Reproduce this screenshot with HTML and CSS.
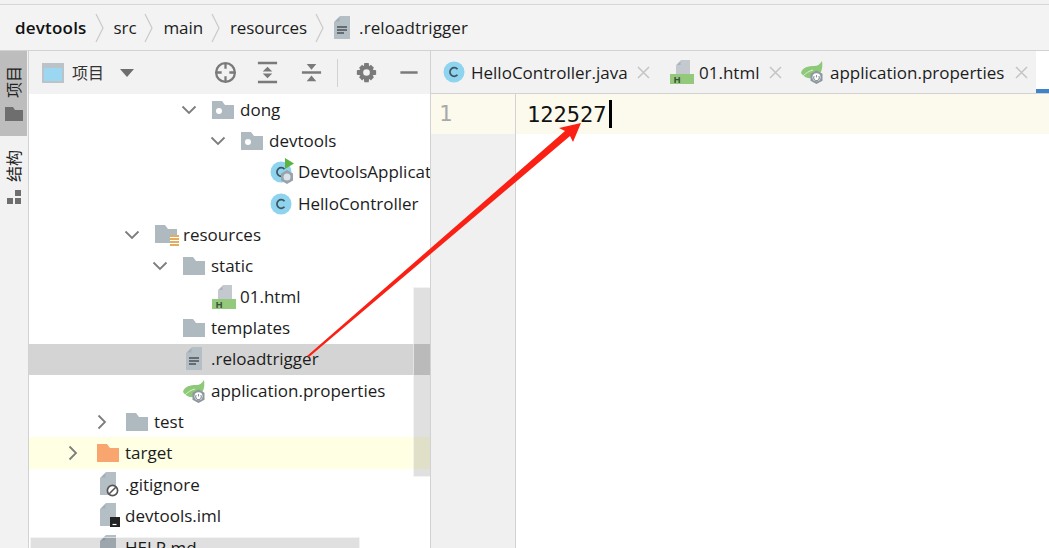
FILE: index.html
```html
<!DOCTYPE html>
<html lang="zh">
<head>
<meta charset="utf-8">
<title>devtools</title>
<link rel="stylesheet" href="styles.css">
</head>
<body>
<svg width="0" height="0" class="defs">
  <defs>
    <symbol id="folder" viewBox="0 0 22 20"><path d="M0 1h10l3 4h9v14H0z" fill="#afb9c0"/></symbol>
    <symbol id="pkg" viewBox="0 0 22 20"><path d="M0 1h10l3 4h9v14H0z" fill="#afb9c0"/><circle cx="7" cy="11" r="3" fill="#fff"/></symbol>
    <symbol id="cls" viewBox="0 0 22 22"><circle cx="11" cy="11" r="10.5" fill="#8ed4ee"/><path d="M14.5 8.2A4.3 4.3 0 1 0 14.5 13.8" fill="none" stroke="#3f5360" stroke-width="1.7"/></symbol>
    <symbol id="html" viewBox="0 0 24 24"><path d="M11 0h9v14H6V5z" fill="#c3c9ce"/><path d="M10.500 1.500L7 5h3.500z" fill="#a9b2b9"/><path d="M0 14h24v10H0z" fill="#94c97b"/><text x="3.500" y="22.500" font-size="9.500" font-weight="700" fill="#3c5040" font-family="Open Sans, sans-serif">H</text></symbol>
    <symbol id="spring" viewBox="0 0 24 24"><path d="M0 13C1 7 8 6 13 6c4 0 6-2 8-5 1 6 0 13-6 16-5 2-11 2-15-4z" fill="#8ec97a"/><path d="M2 16c3-3 6-5 10-6" stroke="#d9efd0" stroke-width="1" fill="none"/><path d="M15.500 10.500l6 3.300v6.900l-6 3.300-6-3.300v-6.900z" fill="#8e979e"/><circle cx="15.500" cy="17.200" r="4" fill="#fff"/><path d="M15.500 15v2.500M13.300 16a2.800 2.800 0 1 0 4.400 0" fill="none" stroke="#8e979e" stroke-width="1.100"/></symbol>
    <symbol id="doc" viewBox="0 0 16 24"><path d="M6 0h10v23H0V6z" fill="#b4bec5"/><path d="M5.500 1L1 5.500h4.500z" fill="#a3aeb6"/><path d="M3 11h10M3 14h10M3 17h7" stroke="#4a5257" stroke-width="1.400"/></symbol>
    <symbol id="plain" viewBox="0 0 16 24"><path d="M6 0h10v23H0V6z" fill="#b4bec5"/><path d="M5.500 1L1 5.500h4.500z" fill="#a3aeb6"/></symbol>
    <symbol id="close" viewBox="0 0 13 13"><path d="M1 1l11 11M12 1L1 12" stroke="#c4c4c4" stroke-width="1.500" fill="none"/></symbol>
    <symbol id="down" viewBox="0 0 16 10"><path d="M1.500 1.500L8 8l6.500-6.500" stroke="#7d7d7d" stroke-width="1.800" fill="none"/></symbol>
    <symbol id="right" viewBox="0 0 10 16"><path d="M1.500 1.500L8 8l-6.500 6.500" stroke="#7d7d7d" stroke-width="1.800" fill="none"/></symbol>
    <symbol id="sep" viewBox="0 0 9 30"><path d="M1 1l7 14-7 14" stroke="#c9c9c9" stroke-width="1.200" fill="none"/></symbol>
  </defs>
</svg>

<div class="app">
  <nav class="crumbs">
    <span class="crumb strong">devtools</span>
    <svg class="sep"><use href="#sep"/></svg>
    <span class="crumb">src</span>
    <svg class="sep"><use href="#sep"/></svg>
    <span class="crumb">main</span>
    <svg class="sep"><use href="#sep"/></svg>
    <span class="crumb">resources</span>
    <svg class="sep"><use href="#sep"/></svg>
    <svg class="crumb-doc"><use href="#doc"/></svg>
    <span class="crumb last">.reloadtrigger</span>
  </nav>

  <div class="main">
    <aside class="stripe">
      <div class="stripe-tab active">
        <span class="vtext">项目</span>
        <svg class="stripe-icon" viewBox="0 0 18 14"><path d="M0 0h8l2 3h8v11H0z" fill="#6e6e6e"/></svg>
      </div>
      <div class="stripe-tab second">
        <span class="vtext">结构</span>
        <svg class="stripe-icon tall" viewBox="0 0 16 15"><path d="M9 0h6v6H9zM1 8h6v6H1zM9 8h6v6H9z" fill="#6e6e6e"/></svg>
      </div>
    </aside>

    <section class="project">
      <header class="toolbar">
        <svg class="win" viewBox="0 0 22 20"><path d="M0 0h22v20H0z" fill="#bcc3c8"/><path d="M2 5h18v13H2z" fill="#9bd7f1"/></svg>
        <span class="tool-title">项目</span>
        <svg class="tri" viewBox="0 0 14 8"><path d="M0 0h14L7 8z" fill="#6e6e6e"/></svg>
        <span class="spacer"></span>
        <svg class="tool locate" viewBox="0 0 24 24"><g fill="none" stroke="#7a7a7a" stroke-width="2.400"><circle cx="12" cy="12" r="9.800"/><path d="M12 2v6M12 16v6M2 12h6M16 12h6"/></g></svg>
        <svg class="tool expand" viewBox="0 0 24 24"><path d="M2 2h20M2 22h20" stroke="#7a7a7a" stroke-width="2.600"/><path d="M12 6l5 5H7zM12 18l5-5H7z" fill="#7a7a7a"/></svg>
        <svg class="tool collapse" viewBox="0 0 24 24"><path d="M2 12h20" stroke="#7a7a7a" stroke-width="2.600"/><path d="M7 3h10l-5 6zM7 21h10l-5-6z" fill="#7a7a7a"/></svg>
        <span class="tool-sep"></span>
        <svg class="tool gear" viewBox="0 0 24 24"><g fill="#7a7a7a"><circle cx="12" cy="12" r="8"/><path d="M9.500 1h5l.6 4h-6.200zM9.500 23h5l.6-4h-6.200zM1 9.500v5l4 .6V8.900zM23 9.500v5l-4 .6V8.900zM3.500 6.500L7 3l3 3-4 4zM20.500 6.500L17 3l-3 3 4 4zM3.500 17.500L7 21l3-3-4-4zM20.500 17.500L17 21l-3-3 4-4z"/></g><circle cx="12" cy="12" r="3.800" fill="#f2f2f2"/></svg>
        <svg class="tool minus" viewBox="0 0 20 24"><path d="M1 12h18" stroke="#7a7a7a" stroke-width="2.600"/></svg>
      </header>

      <div class="tree">
        <div class="row i240"><svg class="arrow"><use href="#down"/></svg><svg class="ic"><use href="#pkg"/></svg><span>dong</span></div>
        <div class="row i269"><svg class="arrow"><use href="#down"/></svg><svg class="ic"><use href="#pkg"/></svg><span>devtools</span></div>
        <div class="row i298 leaf">
          <span class="ic-wrap">
            <svg class="ic-c"><use href="#cls"/></svg>
            <svg class="badge-run" viewBox="0 0 9 11"><path d="M0 0l9 5.500L0 11z" fill="#5cb33f"/></svg>
            <svg class="badge-gear" viewBox="0 0 14 14"><path d="M7 0l6 3.500v7L7 14l-6-3.500v-7z" fill="#9aa3aa"/><circle cx="7" cy="7" r="3.500" fill="#d8e4ea"/></svg>
          </span>
          <span>DevtoolsApplication</span>
        </div>
        <div class="row i298 leaf"><svg class="ic-c"><use href="#cls"/></svg><span>HelloController</span></div>
        <div class="row i183"><svg class="arrow"><use href="#down"/></svg>
          <span class="ic-wrap"><svg class="ic"><use href="#folder"/></svg><span class="res-lines"></span></span>
          <span>resources</span></div>
        <div class="row i211"><svg class="arrow"><use href="#down"/></svg><svg class="ic"><use href="#folder"/></svg><span>static</span></div>
        <div class="row i240 leaf"><svg class="ic-h"><use href="#html"/></svg><span>01.html</span></div>
        <div class="row i211 leaf"><svg class="ic"><use href="#folder"/></svg><span>templates</span></div>
        <div class="row i211 leaf selected"><svg class="ic-doc"><use href="#doc"/></svg><span>.reloadtrigger</span></div>
        <div class="row i211 leaf"><svg class="ic-sp"><use href="#spring"/></svg><span>application.properties</span></div>
        <div class="row i154"><svg class="arrow a-r"><use href="#right"/></svg><svg class="ic"><use href="#folder"/></svg><span>test</span></div>
        <div class="row i125 excluded"><svg class="arrow a-r"><use href="#right"/></svg><svg class="ic" viewBox="0 0 22 20"><path d="M0 1h10l3 4h9v14H0z" fill="#f9a56f"/></svg><span>target</span></div>
        <div class="row i125 leaf low">
          <span class="ic-wrap"><svg class="ic-plain"><use href="#plain"/></svg>
          <svg class="badge-no" viewBox="0 0 14 14"><circle cx="7" cy="7" r="5.500" fill="#fff" stroke="#555" stroke-width="1.800"/><path d="M3.500 10.500l7-7" stroke="#555" stroke-width="1.800"/></svg></span>
          <span>.gitignore</span></div>
        <div class="row i125 leaf low">
          <span class="ic-wrap"><svg class="ic-plain"><use href="#plain"/></svg>
          <svg class="badge-iml" viewBox="0 0 10 10"><path d="M0 0h10v10H0z" fill="#232323"/><path d="M2.500 7.500h4" stroke="#fff" stroke-width="1.200"/></svg></span>
          <span>devtools.iml</span></div>
        <div class="row i125 leaf low">
          <span class="ic-wrap"><svg class="ic-plain"><use href="#plain"/></svg></span>
          <span>HELP.md</span></div>
      </div>

      <div class="vscroll"></div>
      <div class="hscroll"></div>
    </section>

    <section class="editor">
      <div class="tabs">
        <div class="tab t1"><svg class="ic-c"><use href="#cls"/></svg><span>HelloController.java</span><svg class="x"><use href="#close"/></svg></div>
        <div class="tab t2"><svg class="ic-h"><use href="#html"/></svg><span>01.html</span><svg class="x"><use href="#close"/></svg></div>
        <div class="tab t3"><svg class="ic-sp"><use href="#spring"/></svg><span>application.properties</span><svg class="x"><use href="#close"/></svg></div>
        <div class="tab-active"></div>
      </div>
      <div class="code">
        <div class="gutter"><div class="gutter-line">1</div></div>
        <div class="content"><div class="line"><span>122527</span><i class="caret"></i></div></div>
      </div>
    </section>
  </div>

  <svg class="annot" viewBox="0 0 1049 548"><path d="M307 356L565 131 559 128 581 123 573 142 570 136 309 357z" fill="#fb2014"/></svg>
</div>
</body>
</html>
```

FILE: styles.css
```css
* { box-sizing: border-box; }
html, body { margin: 0; padding: 0; }
body {
  width: 1049px;
  height: 548px;
  overflow: hidden;
  background: #f2f2f2;
  color: #1c1c1c;
  font-family: "Open Sans", "Noto Sans CJK SC", sans-serif;
  font-size: 17px;
}
svg { display: block; flex: none; }
.defs { position: absolute; }
.app { position: relative; width: 1049px; height: 548px; padding-top: 4px; display: flex; flex-direction: column; overflow: hidden; }

.crumbs {
  height: 47px;
  flex: none;
  padding-left: 15px;
  display: flex;
  align-items: center;
  border-top: 1px solid #d6d6d6;
  border-bottom: 1px solid #d2d2d2;
  background: #f3f3f3;
}
.crumb { line-height: 24px; letter-spacing: -0.1px; }
.strong { font-weight: 600; color: #111; letter-spacing: 0.2px; }
.last { letter-spacing: 0.1px; }
.sep { width: 9px; height: 30px; margin: 0 10px 0 8px; }
.crumb-doc { width: 16px; height: 24px; margin: 0 9px 0 0; }

.main { flex: 1; display: flex; min-height: 0; }

.stripe { width: 29px; flex: none; background: #f2f2f2; border-right: 1px solid #d2d2d2; }
.stripe-tab { height: 85px; display: flex; flex-direction: column; align-items: center; padding-top: 15px; }
.stripe-tab.active { background: #bdbdbd; margin-right: 1px; }
.stripe-tab.second { padding-top: 14px; }
.vtext { writing-mode: vertical-rl; text-orientation: sideways; transform: rotate(180deg); font-size: 16px; line-height: 18px; color: #222; }
.stripe-icon { width: 18px; height: 14px; margin-top: 9px; }
.stripe-icon.tall { width: 16px; height: 15px; margin-top: 8px; }

.project { width: 402px; flex: none; position: relative; background: #fff; border-right: 1px solid #d2d2d2; overflow: hidden; }
.toolbar { height: 43.400px; background: #f2f2f2; display: flex; align-items: center; padding-left: 13px; }
.win { width: 22px; height: 20px; }
.tool-title { margin-left: 8px; font-size: 16px; color: #333; line-height: 20px; }
.tri { width: 14px; height: 8px; margin-left: 16px; }
.spacer { flex: 1; }
.tool { width: 23px; height: 23px; }
.locate { margin-right: 19px; }
.expand { margin-right: 21px; }
.collapse { margin-right: 14px; }
.tool-sep { width: 1px; height: 28px; background: #d2d2d2; margin-right: 18px; }
.gear { width: 21px; height: 21px; margin-right: 22px; }
.minus { width: 20px; margin-right: 11px; }

.tree { position: relative; }
.row { height: 31.200px; display: flex; align-items: center; white-space: nowrap; line-height: 24px; padding-left: var(--indent); }
.leaf { padding-left: calc(var(--indent) + 31px); }
.low > span:last-child { padding-top: 2px; }
.i125 { --indent: 37px; }
.i154 { --indent: 66px; }
.i183 { --indent: 95px; }
.i211 { --indent: 123px; }
.i240 { --indent: 152px; }
.i269 { --indent: 181px; }
.i298 { --indent: 210px; }
.arrow { width: 16px; height: 10px; margin-right: 15px; }
.a-r { width: 10px; height: 16px; margin-left: 2px; margin-right: 19px; }
.ic { width: 22px; height: 20px; margin-right: 6px; }
.ic-c { width: 22px; height: 22px; margin-right: 6px; }
.ic-h { width: 24px; height: 24px; margin-right: 4px; }
.ic-doc { width: 16px; height: 24px; margin-left: 3px; margin-right: 9px; }
.ic-sp { width: 24px; height: 24px; margin-right: 4px; }
.ic-wrap { position: relative; display: block; width: 28px; height: 24px; flex: none; }
.ic-wrap .ic-c { position: absolute; left: 0; top: 1px; }
.ic-wrap .ic { position: absolute; left: 0; top: 1px; }
.badge-run { position: absolute; left: 15px; top: -2px; width: 9px; height: 11px; }
.badge-gear { position: absolute; left: 10px; top: 10px; width: 14px; height: 14px; }
.res-lines { position: absolute; left: 15px; top: 12px; width: 9px; height: 11px; background: repeating-linear-gradient(#e2ad5e 0 2px, #fff 2px 3px); }
.ic-plain { position: absolute; left: 3px; top: 0; width: 16px; height: 24px; }
.badge-no { position: absolute; left: 9px; top: 12px; width: 13px; height: 13px; }
.badge-iml { position: absolute; left: 13px; top: 14px; width: 10px; height: 10px; }
.selected { background: #d4d4d4; }
.excluded { background: #ffffe4; }
.vscroll { position: absolute; left: 384px; top: 236px; width: 17px; height: 190px; background: rgba(0,0,0,0.12); border: 1px solid rgba(255,255,255,0.6); border-right: 0; }
.hscroll { position: absolute; left: 1px; top: 486px; width: 330px; height: 12px; background: rgba(0,0,0,0.12); border: 1px solid rgba(255,255,255,0.6); border-bottom: 0; }

.editor { flex: 1; min-width: 0; display: flex; flex-direction: column; background: #fff; }
.tabs { height: 43px; flex: none; display: flex; background: #f2f2f2; border-bottom: 1px solid #d2d2d2; }
.tab { display: flex; align-items: center; height: 42px; white-space: nowrap; }
.x { width: 13px; height: 13px; }
.t1 { padding-left: 12px; width: 233px; }
.t1 .x { margin-left: 9px; }
.t2 { width: 131px; padding-left: 6px; }
.t2 .ic-h { margin-right: 5px; }
.t2 .x { margin-left: 10px; }
.t3 { width: 241px; padding-left: 6px; }
.t3 .ic-sp { margin-right: 5px; }
.t3 .x { margin-left: 11px; }
.tab-active { flex: 1; height: 42px; background: #fff; border-bottom: 4px solid #4083c9; }
.code { flex: 1; display: flex; min-height: 0; }
.gutter { width: 85px; flex: none; background: #f0f0f0; border-right: 1px solid #d2d2d2; }
.gutter-line { height: 40px; background: #fcfaed; padding-left: 8px; color: #a9a9a9; font: 22px/39px "DejaVu Sans Mono", monospace; }
.content { flex: 1; min-width: 0; }
.line { height: 40px; background: #fcfaed; padding-left: 11px; display: flex; align-items: center; font: 22px/39px "DejaVu Sans Mono", monospace; color: #111; }
.caret { display: block; width: 2.500px; height: 28px; background: #000; margin-left: 3px; }

.annot { position: absolute; left: 0; top: 0; width: 1049px; height: 548px; pointer-events: none; }
```
